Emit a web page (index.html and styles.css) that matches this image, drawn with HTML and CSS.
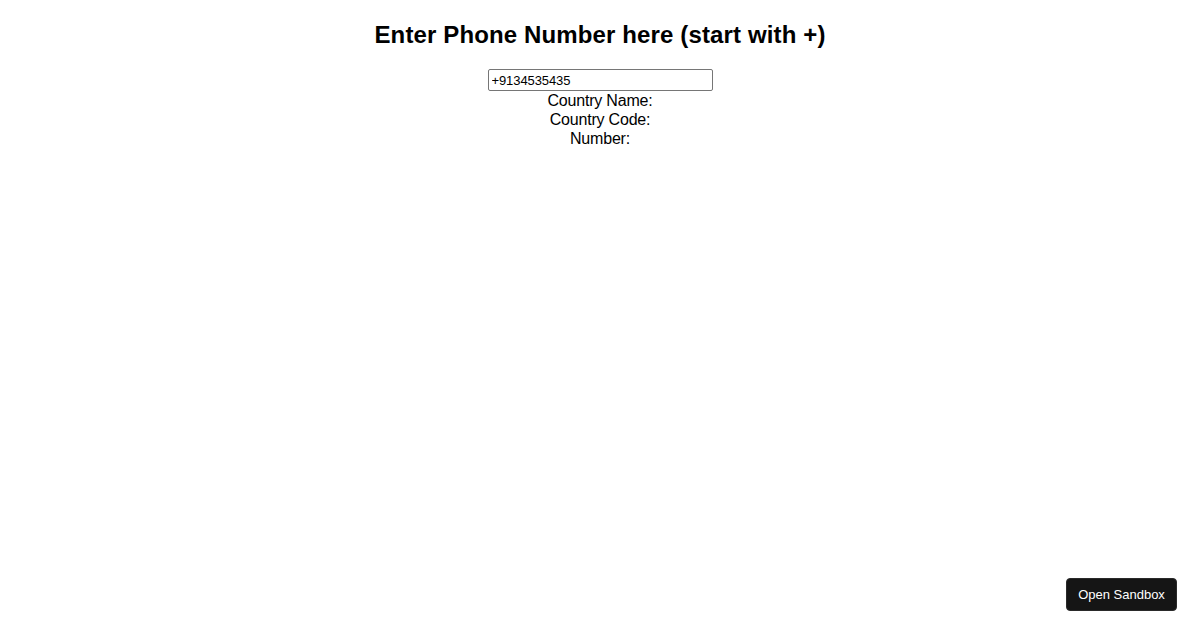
FILE: index.html
```html
<!DOCTYPE html>
<html>
<head>
<meta charset="utf-8">
<link rel="stylesheet" href="styles.css">
</head>
<body>
<div class="app">
  <h2 class="title">Enter Phone Number here (start with +)</h2>
  <input class="phone" type="text" value="+9134535435">
  <div class="line">Country Name:</div>
  <div class="line">Country Code:</div>
  <div class="line">Number:</div>
</div>
<a class="sandbox-btn">Open Sandbox</a>
</body>
</html>
```

FILE: styles.css
```css
html, body {
  margin: 0;
  padding: 0;
}
body {
  margin: 8px;
  font-family: "Liberation Sans", Arial, sans-serif;
  color: #000;
  background: #fff;
}
.app {
  display: flex;
  flex-direction: column;
  align-items: center;
  text-align: center;
}
.title {
  font-size: 24px;
  font-weight: bold;
  margin: 13px 0 20px;
  line-height: 28px;
  letter-spacing: 0.13px;
}
.phone {
  box-sizing: border-box;
  width: 225px;
  height: 22px;
  border: 1px solid #767676;
  border-radius: 2px;
  padding: 1px 3px;
  font-family: "Liberation Sans", Arial, sans-serif;
  font-size: 13px;
  letter-spacing: -0.1px;
  color: #000;
  margin: 0;
}
.line {
  font-size: 16px;
  line-height: 19px;
  letter-spacing: -0.2px;
}
.sandbox-btn {
  position: fixed;
  right: 23px;
  bottom: 19px;
  width: 111px;
  height: 33px;
  box-sizing: border-box;
  display: flex;
  align-items: center;
  justify-content: center;
  background: #151515;
  color: #fff;
  border-radius: 4px;
  font-family: "Liberation Sans", Arial, sans-serif;
  font-size: 13px;
  border: 1px solid #2a2a2a;
}
```
